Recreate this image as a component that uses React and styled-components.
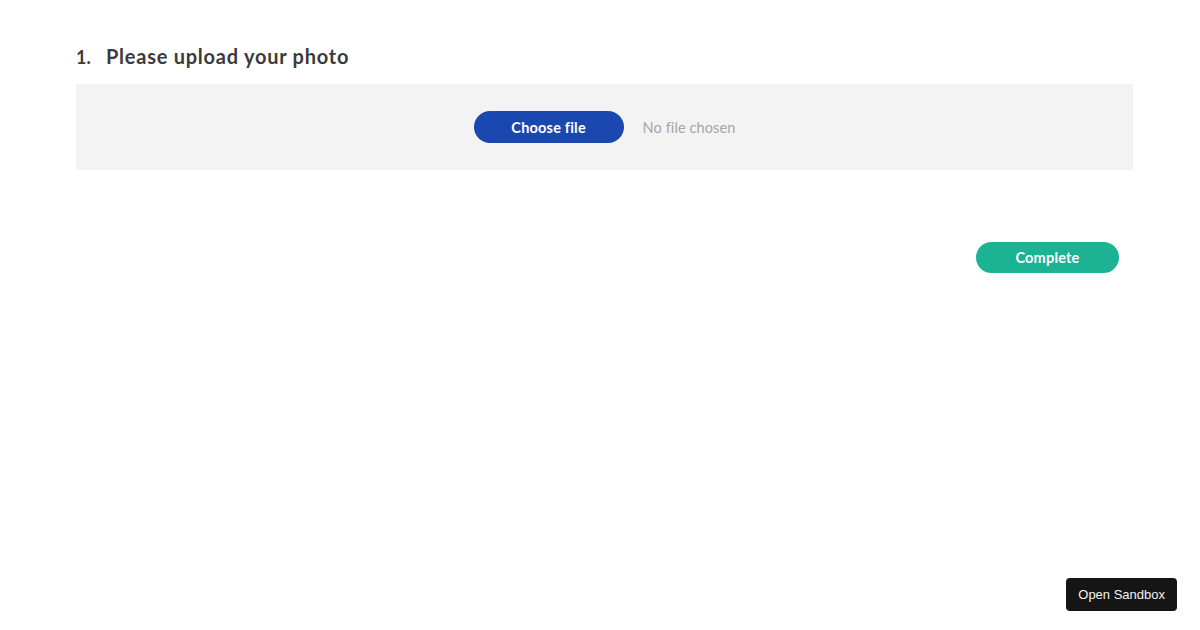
import React, { useState } from 'react';
import styled, { createGlobalStyle } from 'styled-components';

const GlobalStyle = createGlobalStyle`
    html, body {
        margin: 0;
        padding: 0;
        background: #ffffff;
        font-family: 'Lato', 'Open Sans', sans-serif;
    }
`;

const Page = styled.main`
    padding: 42px 67px 0 76px;
`;

const StepTitle = styled.h2`
    display: flex;
    align-items: baseline;
    margin: 0 0 12px;
    font-size: 20px;
    font-weight: 700;
    color: #3b3b3b;
    line-height: 29px;
    letter-spacing: 0.75px;

    > span {
        width: 30px;
        font-size: 18px;
        letter-spacing: 0;
    }
`;

const UploadArea = styled.label`
    display: flex;
    align-items: center;
    justify-content: center;
    gap: 19px;
    height: 86px;
    background: #f3f3f3;
    cursor: pointer;

    > input {
        display: none;
    }
`;

const PillButton = styled.button`
    display: inline-flex;
    align-items: center;
    justify-content: center;
    height: ${(props) => props.height || 32}px;
    width: ${(props) => props.width}px;
    padding: 0;
    border: none;
    border-radius: 16px;
    background: ${(props) => props.color};
    color: #ffffff;
    font-family: inherit;
    font-size: 14.5px;
    font-weight: 700;
    letter-spacing: 0.2px;
    cursor: pointer;
`;

const FileName = styled.span`
    font-size: 14.5px;
    color: #a2a6a8;
    letter-spacing: 0.1px;
`;

const Actions = styled.div`
    display: flex;
    justify-content: flex-end;
    padding: 72px 14px 0 0;
`;

const SandboxButton = styled.a`
    position: fixed;
    right: 23px;
    bottom: 19px;
    padding: 0 12px;
    height: 33px;
    display: flex;
    align-items: center;
    border-radius: 4px;
    background: #151515;
    color: #f2f2f2;
    font-family: 'Liberation Sans', Arial, sans-serif;
    font-size: 13px;
    text-decoration: none;
`;

function App() {
    const [fileName, setFileName] = useState('');

    return (
        <>
            <GlobalStyle />
            <Page>
                <StepTitle>
                    <span>1.</span>
                    Please upload your photo
                </StepTitle>
                <UploadArea>
                    <input type="file" onChange={(e) => setFileName(e.target.files[0]?.name || '')} />
                    <PillButton as="span" color="#1a47b0" width={150}>
                        Choose file
                    </PillButton>
                    <FileName>{fileName || 'No file chosen'}</FileName>
                </UploadArea>
                <Actions>
                    <PillButton type="button" color="#1bb394" width={143} height={31}>
                        Complete
                    </PillButton>
                </Actions>
            </Page>
            <SandboxButton href="#">Open Sandbox</SandboxButton>
        </>
    );
}

export default App;
